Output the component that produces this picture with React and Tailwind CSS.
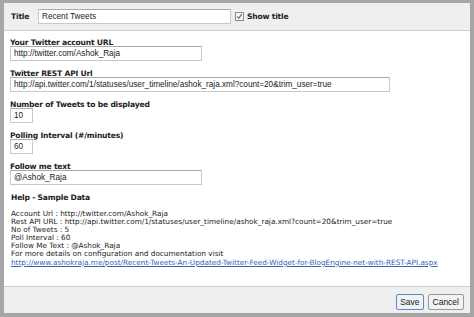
import React from "react";

const lbl = "block h-[9px] leading-[11px] text-[7.6px] tracking-[-0.2px] font-bold text-[#222] font-['DejaVu_Sans',sans-serif] whitespace-nowrap";
const inp = "h-[15px] border border-[#c9c9c9] border-t-[#a9a9a9] bg-white pl-[3px] text-[8.2px] leading-[13px] text-[#222] font-['Liberation_Sans',Arial,sans-serif] whitespace-nowrap overflow-hidden";

function Field({ label, value, w }) {
  return (
    <div className="mb-[7px]">
      <div className={lbl}>{label}</div>
      <div className={inp + " " + w}>{value}</div>
    </div>
  );
}

export default function App() {
  return (
    <div className="w-[474px] h-[317px] bg-[#a6a6a6] pt-[3px] pl-[4px] pr-[4px] pb-[4px] flex flex-col">
      <div className="flex-1 bg-white flex flex-col">
        <div className="h-[28px] bg-[#efefef] border-b border-[#cfcfcf] flex items-center pl-[7px]">
          <span className="text-[7.6px] tracking-[-0.2px] font-bold text-[#222] font-['DejaVu_Sans',sans-serif] w-[27px]">Title</span>
          <div className={inp + " w-[193px]"}>Recent Tweets</div>
          <div className="ml-[4px] w-[9px] h-[9px] border border-[#8c8c8c] bg-[#f4f4f4] flex items-center justify-center">
            <svg viewBox="0 0 9 9" className="w-[7px] h-[7px]">
              <path d="M1.5 4.5 L3.5 6.8 L7.5 1.5" fill="none" stroke="#4b5a78" strokeWidth="1.3" />
            </svg>
          </div>
          <span className="ml-[3px] text-[7.6px] tracking-[-0.2px] font-bold text-[#222] font-['DejaVu_Sans',sans-serif]">Show title</span>
        </div>
        <div className="flex-1 pl-[6px] pt-[6px]">
          <Field label="Your Twitter account URL" value="http://twitter.com/Ashok_Raja" w="w-[192px]" />
          <Field label="Twitter REST API Url" value="http://api.twitter.com/1/statuses/user_timeline/ashok_raja.xml?count=20&trim_user=true" w="w-[380px]" />
          <Field label="Number of Tweets to be displayed" value="10" w="w-[23px]" />
          <Field label="Polling Interval (#/minutes)" value="60" w="w-[23px]" />
          <Field label="Follow me text" value="@Ashok_Raja" w="w-[192px]" />
          <div className={lbl + " pl-[1px]"}>Help - Sample Data</div>
          <div className="mt-[9px] pl-[1px] text-[7.3px] leading-[8.1px] text-[#222] font-['DejaVu_Sans',sans-serif] whitespace-nowrap">
            <div>Account Url : http://twitter.com/Ashok_Raja</div>
            <div>Rest API URL : http://api.twitter.com/1/statuses/user_timeline/ashok_raja.xml?count=20&trim_user=true</div>
            <div>No of Tweets : 5</div>
            <div>Poll Interval : 60</div>
            <div>Follow Me Text : @Ashok_Raja</div>
            <div>For more details on configuration and documentation visit</div>
            <a href="#" className="text-[#3a62b8] underline">http://www.ashokraja.me/post/Recent-Tweets-An-Updated-Twitter-Feed-Widget-for-BlogEngine-net-with-REST-API.aspx</a>
          </div>
        </div>
        <div className="h-[27px] bg-[#efefef] border-t border-[#cfcfcf] flex items-center justify-end pr-[6px] pt-[4px] gap-[4px]">
          <button className="h-[16px] px-[3px] border border-[#5a8ac8] bg-[#f2f2f2] rounded-[2px] text-[8.5px] text-[#222] font-['Liberation_Sans',Arial,sans-serif]">Save</button>
          <button className="h-[16px] px-[4px] border border-[#9a9a9a] bg-[#f2f2f2] rounded-[2px] text-[8.5px] text-[#222] font-['Liberation_Sans',Arial,sans-serif]">Cancel</button>
        </div>
      </div>
    </div>
  );
}
